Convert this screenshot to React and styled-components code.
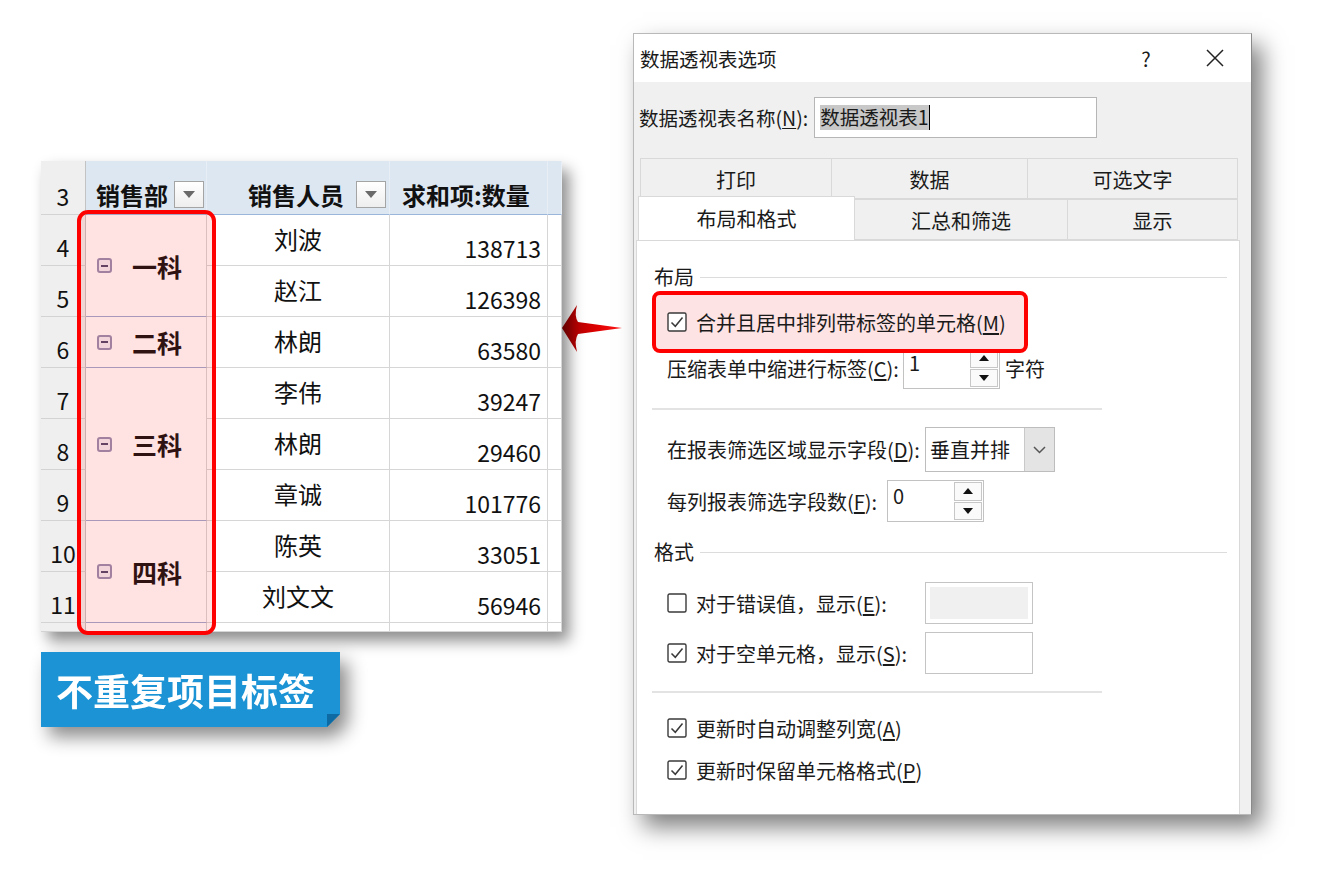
import styled, { createGlobalStyle } from 'styled-components';

const GlobalStyle = createGlobalStyle`
  html, body {
    margin: 0;
    padding: 0;
    background: #fff;
  }
  body {
    font-family: "Noto Sans CJK SC", "Noto Sans", sans-serif;
    color: #111;
  }
`;

const people = [
    { n: 4, name: '刘波', qty: '138713' },
    { n: 5, name: '赵江', qty: '126398' },
    { n: 6, name: '林朗', qty: '63580' },
    { n: 7, name: '李伟', qty: '39247' },
    { n: 8, name: '林朗', qty: '29460' },
    { n: 9, name: '章诚', qty: '101776' },
    { n: 10, name: '陈英', qty: '33051' },
    { n: 11, name: '刘文文', qty: '56946' },
];

const depts = [
    { label: '一科', row: 2, span: 2 },
    { label: '二科', row: 4, span: 1 },
    { label: '三科', row: 5, span: 3 },
    { label: '四科', row: 8, span: 2 },
];

function Checkbox({ checked }) {
    return (
        <CheckSvg viewBox="0 0 20 20">
            <rect x="1" y="1" width="18" height="18" rx="1.5" fill="#fff" stroke="#3a3a3a" strokeWidth="1.4" />
            {checked && <path d="M4.5 10.5 L8.3 14.3 L15.5 5.5" fill="none" stroke="#3a3a3a" strokeWidth="1.5" />}
        </CheckSvg>
    );
}

function FilterButton() {
    return (
        <DropBtn>
            <svg width="12" height="7" viewBox="0 0 12 7"><path d="M0 0 L12 0 L6 7 Z" fill="#6a6a6a" /></svg>
        </DropBtn>
    );
}

function Spinner({ value }) {
    return (
        <SpinBox>
            <SpinValue>{value}</SpinValue>
            <SpinButtons>
                <SpinHalf>
                    <svg width="10" height="6" viewBox="0 0 10 6"><path d="M0 6 L10 6 L5 0 Z" fill="#111" /></svg>
                </SpinHalf>
                <SpinHalf>
                    <svg width="10" height="6" viewBox="0 0 10 6"><path d="M0 0 L10 0 L5 6 Z" fill="#111" /></svg>
                </SpinHalf>
            </SpinButtons>
        </SpinBox>
    );
}

function Sheet() {
    return (
        <SheetGrid>
            <RowHead $row={1}>3</RowHead>
            <HeadCell $col={2} $pad={10} $gap={6}>销售部<FilterButton /></HeadCell>
            <HeadCell $col={3} $pad={41} $gap={12}>销售人员<FilterButton /></HeadCell>
            <HeadCell $col={4} $pad={12}>求和项:数量</HeadCell>
            <HeadCell $col={5} />

            {people.map((p, i) => (
                <RowFrag key={p.n} p={p} row={i + 2} />
            ))}

            {depts.map(d => (
                <DeptCell key={d.label} $row={d.row} $span={d.span}>
                    <CollapseIcon />
                    {d.label}
                </DeptCell>
            ))}

            <RowHead $row={10} />
            <Cell $row={10} $col={2} />
            <Cell $row={10} $col={3} />
            <Cell $row={10} $col={4} />
            <Cell $row={10} $col={5} />

            <GroupHighlight />
        </SheetGrid>
    );
}

function RowFrag({ p, row }) {
    return (
        <>
            <RowHead $row={row}>{p.n}</RowHead>
            <NameCell $row={row}>{p.name}</NameCell>
            <NumCell $row={row}>{p.qty}</NumCell>
            <Cell $row={row} $col={5} />
        </>
    );
}

function Arrow() {
    return (
        <svg width="62" height="52" viewBox="0 0 62 52">
            <defs>
                <linearGradient id="arrowFill" x1="0" y1="0" x2="1" y2="0">
                    <stop offset="0" stopColor="#9c0000" />
                    <stop offset="0.6" stopColor="#e00000" />
                    <stop offset="1" stopColor="#ff1a1a" />
                </linearGradient>
            </defs>
            <path d="M0 25 L15 2 Q12 13 16 19 L60 25 L16 31 Q12 37 15 49 Z" fill="url(#arrowFill)" />
        </svg>
    );
}

function OptionsDialog() {
    return (
        <Dialog>
            <TitleBar>
                <Title>数据透视表选项</Title>
                <HelpMark>?</HelpMark>
                <CloseBtn>
                    <svg width="18" height="18" viewBox="0 0 18 18">
                        <path d="M1 1 L17 17 M17 1 L1 17" stroke="#222" strokeWidth="1.5" />
                    </svg>
                </CloseBtn>
            </TitleBar>
            <DialogBody>
                <NameRow>
                    <span>数据透视表名称(<U>N</U>):</span>
                    <NameInput>
                        <Selected>数据透视表1</Selected>
                        <Caret />
                    </NameInput>
                </NameRow>

                <TabRow $indent={4}>
                    <Tab $w={192}>打印</Tab>
                    <Tab $w={196}>数据</Tab>
                    <Tab $w={210}>可选文字</Tab>
                </TabRow>
                <TabRow $indent={2}>
                    <Tab $w={217} $active>布局和格式</Tab>
                    <Tab $w={213}>汇总和筛选</Tab>
                    <Tab $w={170}>显示</Tab>
                </TabRow>

                <TabPanel>
                    <GroupHeader>布局<GroupLine /></GroupHeader>

                    <HighlightRow>
                        <Checkbox checked />
                        <span>合并且居中排列带标签的单元格(<U>M</U>)</span>
                    </HighlightRow>

                    <OptionRow $top={-6} $h={42}>
                        <FieldLabel $w={232}>压缩表单中缩进行标签(<U>C</U>):</FieldLabel>
                        <Spinner value="1" />
                        <Suffix>字符</Suffix>
                    </OptionRow>

                    <Separator $top={19} />

                    <OptionRow $top={17} $h={45}>
                        <FieldLabel $w={254}>在报表筛选区域显示字段(<U>D</U>):</FieldLabel>
                        <SelectBox>
                            <SelectValue>垂直并排</SelectValue>
                            <SelectArrow>
                                <svg width="13" height="8" viewBox="0 0 13 8">
                                    <path d="M1 1 L6.5 6.5 L12 1" fill="none" stroke="#555" strokeWidth="1.5" />
                                </svg>
                            </SelectArrow>
                        </SelectBox>
                    </OptionRow>

                    <OptionRow $top={8} $h={42}>
                        <FieldLabel $w={216}>每列报表筛选字段数(<U>F</U>):</FieldLabel>
                        <Spinner value="0" />
                    </OptionRow>

                    <GroupHeader $top={14}>格式<GroupLine /></GroupHeader>

                    <OptionRow $top={16} $h={42}>
                        <CheckLabel $w={258}>
                            <Checkbox />
                            <span>对于错误值，显示(<U>E</U>):</span>
                        </CheckLabel>
                        <ValueBox $disabled />
                    </OptionRow>

                    <OptionRow $top={8} $h={42}>
                        <CheckLabel $w={258}>
                            <Checkbox checked />
                            <span>对于空单元格，显示(<U>S</U>):</span>
                        </CheckLabel>
                        <ValueBox />
                    </OptionRow>

                    <Separator $top={17} />

                    <OptionRow $top={17} $h={36}>
                        <CheckLabel>
                            <Checkbox checked />
                            <span>更新时自动调整列宽(<U>A</U>)</span>
                        </CheckLabel>
                    </OptionRow>

                    <OptionRow $top={6} $h={36}>
                        <CheckLabel>
                            <Checkbox checked />
                            <span>更新时保留单元格格式(<U>P</U>)</span>
                        </CheckLabel>
                    </OptionRow>
                </TabPanel>
            </DialogBody>
        </Dialog>
    );
}

export default function App() {
    return (
        <>
            <GlobalStyle />
            <Page>
                <LeftColumn>
                    <Sheet />
                    <RibbonShadow>
                        <Ribbon>不重复项目标签</Ribbon>
                    </RibbonShadow>
                </LeftColumn>
                <ArrowColumn>
                    <Arrow />
                </ArrowColumn>
                <OptionsDialog />
            </Page>
        </>
    );
}

/* ---------- page ---------- */

const Page = styled.div`
    display: flex;
    align-items: flex-start;
    padding: 33px 0 0 41px;
    width: 1318px;
    height: 879px;
    box-sizing: border-box;
    overflow: hidden;
`;

const LeftColumn = styled.div`
    margin-top: 128px;
    width: 521px;
    display: flex;
    flex-direction: column;
`;

const ArrowColumn = styled.div`
    width: 71px;
    margin-top: 270px;
    display: flex;
`;

/* ---------- spreadsheet ---------- */

const SheetGrid = styled.div`
    position: relative;
    display: grid;
    grid-template-columns: 45px 121px 183px 158px 14px;
    grid-template-rows: 54px repeat(8, 51px) 9px;
    background: #fff;
    box-shadow: 7px 9px 14px rgba(0, 0, 0, 0.45);
    font-size: 24px;
    color: #111;
`;

const Cell = styled.div`
    grid-row: ${p => p.$row} / span ${p => p.$span || 1};
    grid-column: ${p => p.$col};
    border-right: 1px solid #d6d6d6;
    border-bottom: 1px solid #d6d6d6;
    box-sizing: border-box;
    overflow: hidden;
    white-space: nowrap;
`;

const RowHead = styled(Cell).attrs({ $col: 1 })`
    background: #efefef;
    border-right: 1px solid #c3c3c3;
    border-bottom: 1px solid #d3d3d3;
    display: flex;
    align-items: flex-end;
    justify-content: center;
    padding-bottom: 3px;
    font-size: 23px;
    line-height: 1.2;
`;

const HeadCell = styled(Cell).attrs({ $row: 1 })`
    background: #dde7f2;
    border-right: 1px solid #e7eef6;
    border-bottom: 1px solid #9ab6db;
    display: flex;
    align-items: flex-end;
    padding: 0 0 4px ${p => p.$pad || 0}px;
    gap: ${p => p.$gap || 0}px;
    font-weight: 700;
    font-size: 24px;
    line-height: 1.2;
`;

const DropBtn = styled.div`
    width: 30px;
    height: 27px;
    margin-bottom: 2px;
    box-sizing: border-box;
    border: 1px solid #a4a4a4;
    background: linear-gradient(#ffffff, #eeeeee);
    display: flex;
    align-items: center;
    justify-content: center;
    flex-shrink: 0;
`;

const NameCell = styled(Cell).attrs({ $col: 3 })`
    display: flex;
    align-items: center;
    justify-content: center;
    padding-bottom: 3px;
`;

const NumCell = styled(Cell).attrs({ $col: 4 })`
    display: flex;
    align-items: flex-end;
    justify-content: flex-end;
    padding: 0 6px 2px 0;
    font-size: 23px;
    line-height: 1.25;
`;

const DeptCell = styled(Cell).attrs({ $col: 2 })`
    border-bottom: 1px solid #9ea9d2;
    display: flex;
    align-items: center;
    padding-left: 11px;
    gap: 20px;
    font-weight: 700;
    font-size: 25px;
`;

const CollapseIcon = styled.span`
    width: 15px;
    height: 15px;
    box-sizing: border-box;
    border: 2px solid #958eb2;
    border-radius: 3px;
    background: #f1eef6;
    position: relative;
    flex-shrink: 0;

    &::after {
        content: '';
        position: absolute;
        left: 2px;
        right: 2px;
        top: 4.5px;
        height: 2px;
        background: #4d476c;
    }
`;

const GroupHighlight = styled.div`
    position: absolute;
    left: 36px;
    top: 49px;
    width: 139px;
    height: 425px;
    box-sizing: border-box;
    border: 4px solid #ff0000;
    border-radius: 11px;
    background: rgba(255, 40, 40, 0.13);
    pointer-events: none;
`;

const RibbonShadow = styled.div`
    margin-top: 20px;
    width: 299px;
    filter: drop-shadow(8px 10px 9px rgba(0, 0, 0, 0.45));
`;

const Ribbon = styled.div`
    height: 75px;
    box-sizing: border-box;
    padding-left: 15px;
    display: flex;
    align-items: center;
    background: #1b93d4;
    color: #fff;
    font-size: 37px;
    font-weight: 700;
    position: relative;
    clip-path: polygon(0 0, 100% 0, 100% calc(100% - 13px), calc(100% - 13px) 100%, 0 100%);

    &::after {
        content: '';
        position: absolute;
        right: 0;
        bottom: 0;
        width: 13px;
        height: 13px;
        background: linear-gradient(to bottom right, #0e6aa3 50%, transparent 50%);
    }
`;

/* ---------- dialog ---------- */

const Dialog = styled.div`
    width: 619px;
    height: 782px;
    box-sizing: border-box;
    display: flex;
    flex-direction: column;
    background: #f0f0f0;
    border: 1px solid #b9b9b9;
    border-right-color: #8a8a8a;
    box-shadow: 10px 12px 22px rgba(0, 0, 0, 0.5);
    font-size: 20px;
    color: #1a1a1a;
`;

const TitleBar = styled.div`
    height: 48px;
    flex-shrink: 0;
    background: #fff;
    display: flex;
    align-items: center;
    padding-left: 6px;
`;

const Title = styled.div`
    flex: 1;
    font-size: 19.5px;
`;

const HelpMark = styled.div`
    width: 30px;
    text-align: center;
    font-size: 20px;
    margin-right: 45px;
`;

const CloseBtn = styled.div`
    width: 18px;
    display: flex;
    margin-right: 27px;
`;

const DialogBody = styled.div`
    flex: 1;
    display: flex;
    flex-direction: column;
    padding: 15px 11px 0 2px;
    min-height: 0;
`;

const U = styled.span`
    text-decoration: underline;
    text-underline-offset: 2px;
`;

const NameRow = styled.div`
    display: flex;
    align-items: center;
    gap: 6px;
    padding-left: 3px;
    height: 41px;
    font-size: 19.5px;
`;

const NameInput = styled.div`
    width: 283px;
    height: 41px;
    box-sizing: border-box;
    border: 1px solid #b6b6b6;
    background: #fff;
    display: flex;
    align-items: center;
    padding-left: 5px;
`;

const Selected = styled.span`
    background: #c8c8c8;
    line-height: 1.25;
`;

const Caret = styled.span`
    width: 1.5px;
    height: 25px;
    background: #000;
`;

const TabRow = styled.div`
    display: flex;
    margin-left: ${p => p.$indent}px;
    margin-top: ${p => (p.$indent === 4 ? 20 : 0)}px;
    position: relative;
    z-index: 1;
`;

const Tab = styled.div`
    width: ${p => p.$w}px;
    height: ${p => (p.$active ? 44 : 41)}px;
    margin-top: ${p => (p.$active ? -3 : 0)}px;
    margin-bottom: ${p => (p.$active ? -1 : 0)}px;
    box-sizing: border-box;
    border: 1px solid #d9d9d9;
    border-bottom: ${p => (p.$active ? 'none' : '1px solid #d9d9d9')};
    border-left-width: ${p => (p.$active ? 1 : 0)}px;
    background: ${p => (p.$active ? '#fff' : '#f0f0f0')};
    display: flex;
    align-items: center;
    justify-content: center;
    padding-top: ${p => (p.$active ? 0 : 2)}px;

    &:first-child {
        border-left-width: 1px;
    }
`;

const TabPanel = styled.div`
    flex: 1;
    background: #fff;
    border: 1px solid #d9d9d9;
    border-bottom: none;
    display: flex;
    flex-direction: column;
    padding-top: 20px;
`;

const GroupHeader = styled.div`
    height: 30px;
    margin-top: ${p => p.$top || 0}px;
    display: flex;
    align-items: center;
    padding-left: 17px;
    padding-right: 12px;
`;

const GroupLine = styled.div`
    flex: 1;
    height: 1px;
    background: #dcdcdc;
    margin-left: 6px;
    margin-top: 2px;
`;

const HighlightRow = styled.div`
    position: relative;
    z-index: 2;
    margin-left: 15px;
    width: 376px;
    height: 62px;
    box-sizing: border-box;
    border: 4px solid #ff0000;
    border-radius: 8px;
    background: #fde3e3;
    display: flex;
    align-items: center;
    gap: 9px;
    padding-left: 11px;
    white-space: nowrap;
`;

const CheckSvg = styled.svg`
    width: 20px;
    height: 20px;
    flex-shrink: 0;
`;

const OptionRow = styled.div`
    height: ${p => p.$h}px;
    margin-top: ${p => p.$top}px;
    display: flex;
    align-items: center;
    padding-left: 30px;
    white-space: nowrap;
`;

const FieldLabel = styled.span`
    width: ${p => p.$w}px;
    margin-right: 4px;
`;

const CheckLabel = styled.span`
    display: flex;
    align-items: center;
    gap: 9px;
    width: ${p => (p.$w ? `${p.$w}px` : 'auto')};
`;

const Suffix = styled.span`
    margin-left: 5px;
`;

const SpinBox = styled.div`
    width: 97px;
    height: 42px;
    box-sizing: border-box;
    border: 1px solid #c2c2c2;
    background: #fff;
    display: flex;
`;

const SpinValue = styled.div`
    flex: 1;
    padding: 2px 0 0 5px;
    line-height: 1.3;
`;

const SpinButtons = styled.div`
    width: 28px;
    display: flex;
    flex-direction: column;
    gap: 1px;
    padding: 1px 1px 1px 0;
`;

const SpinHalf = styled.div`
    flex: 1;
    border: 1px solid #c7c7c7;
    background: #fafafa;
    display: flex;
    align-items: center;
    justify-content: center;
`;

const SelectBox = styled.div`
    width: 130px;
    height: 45px;
    box-sizing: border-box;
    border: 1px solid #bdbdbd;
    background: #fff;
    display: flex;
`;

const SelectValue = styled.div`
    flex: 1;
    display: flex;
    align-items: center;
    padding-left: 4px;
`;

const SelectArrow = styled.div`
    width: 29px;
    background: #e4e4e4;
    border-left: 1px solid #c9c9c9;
    display: flex;
    align-items: center;
    justify-content: center;
`;

const ValueBox = styled.div`
    width: 108px;
    height: 42px;
    box-sizing: border-box;
    border: 1px solid #c4c4c4;
    background: ${p => (p.$disabled ? '#f0f0f0' : '#fff')};
    box-shadow: inset 0 0 0 4px #fff;
`;

const Separator = styled.div`
    margin: ${p => p.$top}px 0 0 15px;
    width: 450px;
    height: 2px;
    background: #e3e3e3;
    flex-shrink: 0;
`;
